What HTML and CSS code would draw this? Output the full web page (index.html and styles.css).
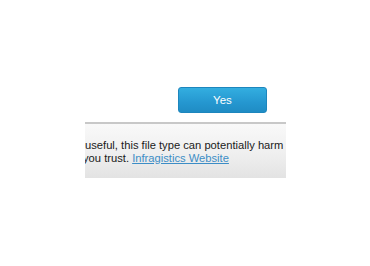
FILE: index.html
```html
<!DOCTYPE html>
<html>
<head>
<meta charset="utf-8">
<link rel="stylesheet" href="styles.css">
</head>
<body>
<div class="page">
  <div class="actions">
    <button class="btn-yes">Yes</button>
  </div>
  <div class="notice">
    <div class="notice-text">
      <div class="line line-1">useful, this file type can potentially harm your computer.</div>
      <div class="line line-2">you trust. <a href="#" class="link">Infragistics Website</a></div>
    </div>
  </div>
</div>
</body>
</html>
```
FILE: styles.css
```css
html, body {
  margin: 0;
  padding: 0;
  background: #ffffff;
}
.page {
  width: 370px;
  height: 266px;
  padding-top: 87px;
  box-sizing: border-box;
  font-family: "Liberation Sans", Arial, sans-serif;
}
.actions {
  display: flex;
  padding-left: 178px;
}
.btn-yes {
  width: 89px;
  height: 26px;
  margin: 0;
  padding: 0;
  border: 1px solid #1d86bd;
  border-radius: 3px;
  background: linear-gradient(to bottom, #33aee0 0%, #2597d0 60%, #1f8cc4 100%);
  color: #ffffff;
  font-family: "Liberation Sans", Arial, sans-serif;
  font-size: 11.5px;
}
.notice {
  margin-top: 9px;
  margin-left: 85px;
  width: 201px;
  height: 56px;
  box-sizing: border-box;
  border-top: 2px solid #c8c8c8;
  background: linear-gradient(to bottom, #f9f9f9 0%, #eeeeee 60%, #e3e3e3 100%);
  overflow: hidden;
}
.notice-text {
  padding-top: 15px;
  font-size: 11.2px;
  line-height: 13px;
  color: #1a1a1a;
}
.line {
  white-space: nowrap;
}
.line-2 {
  margin-left: -2px;
}
.link {
  color: #3c8dc6;
  text-decoration: underline;
}
```
